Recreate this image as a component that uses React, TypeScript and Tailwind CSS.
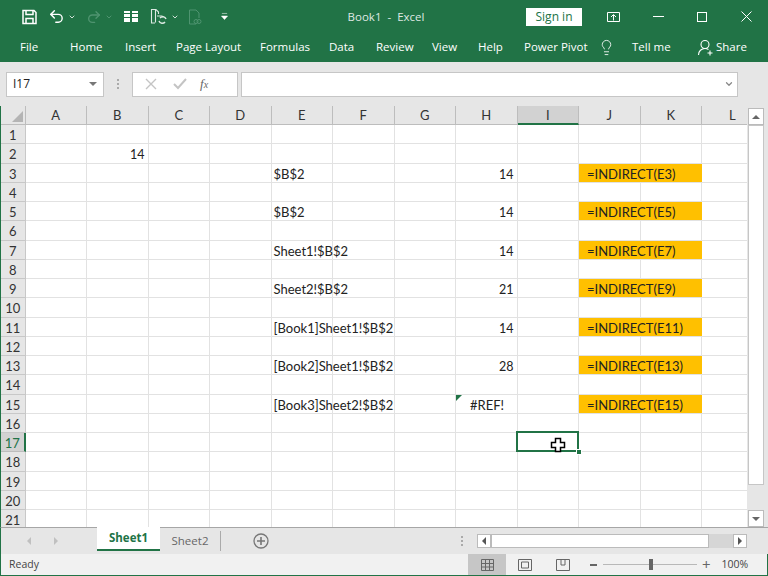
import { ChevronDown, Lightbulb, Redo2, Undo2 } from "lucide-react";

const columns = ["A", "B", "C", "D", "E", "F", "G", "H", "I", "J", "K", "L"];
const rows = Array.from({ length: 21 }, (_, i) => i + 1);

const cells: Record<string, string> = {
  B2: "14",
  E3: "$B$2",
  H3: "14",
  J3: "=INDIRECT(E3)",
  E5: "$B$2",
  H5: "14",
  J5: "=INDIRECT(E5)",
  E7: "Sheet1!$B$2",
  H7: "14",
  J7: "=INDIRECT(E7)",
  E9: "Sheet2!$B$2",
  H9: "21",
  J9: "=INDIRECT(E9)",
  E11: "[Book1]Sheet1!$B$2",
  H11: "14",
  J11: "=INDIRECT(E11)",
  E13: "[Book2]Sheet1!$B$2",
  H13: "28",
  J13: "=INDIRECT(E13)",
  E15: "[Book3]Sheet2!$B$2",
  H15: "#REF!",
  J15: "=INDIRECT(E15)",
};

const tabs = [
  { name: "Home", width: "w-[55px]" },
  { name: "Insert", width: "w-[51px]" },
  { name: "Page Layout", width: "w-[84px]" },
  { name: "Formulas", width: "w-[69px]" },
  { name: "Data", width: "w-[47px]" },
  { name: "Review", width: "w-[56px]" },
  { name: "View", width: "w-[46px]" },
  { name: "Help", width: "w-[46px]" },
  { name: "Power Pivot", width: "w-[74px]" },
];

const Cell = ({ col, row }: { col: string; row: number }) => {
  const id = `${col}${row}`;
  const value = cells[id];
  const isOrange = col === "J" && value;
  const isOrangeK = col === "K" && cells[`J${row}`];
  const isSelected = id === "I17";
  const isNumber = value && col !== "E" && col !== "J" && value !== "#REF!";

  return (
    <div
      className={`relative h-[19.25px] whitespace-nowrap leading-[21px] text-[#222] ${
        isOrange || isOrangeK ? "bg-[#ffc000] border-b border-b-[#e2e2e2]" : "border-b border-r border-[#e2e2e2]"
      } ${isNumber ? "text-right pr-[3px] text-[12.5px]" : "pl-[2px] text-[13px]"} ${col === "J" ? "pl-[8px] text-[12.5px]" : ""}`}
    >
      {isNumber ? value : null}
      {value && !isNumber && value !== "#REF!" ? <span className="relative z-10">{value}</span> : null}
      {value === "#REF!" ? (
        <>
          <div className="absolute left-0 top-0 border-t-[6px] border-r-[6px] border-t-[#217346] border-r-transparent" />
          <div className="pl-[12px]">{value}</div>
        </>
      ) : null}
      {isSelected ? (
        <>
          <div className="absolute -left-[2px] -top-[2px] -right-[1px] -bottom-[1px] z-20 border-2 border-[#217346]" />
          <div className="absolute right-[-4px] bottom-[-4px] z-30 h-[6px] w-[6px] border border-white bg-[#217346]" />
          <svg className="absolute left-[32px] top-[4px] z-30" width="16" height="16" viewBox="0 0 16 16">
            <path d="M5.500 1.500h5v4h4v5h-4v4h-5v-4h-4v-5h4z" fill="#fff" stroke="#000" strokeWidth="1.5" />
          </svg>
        </>
      ) : null}
    </div>
  );
};

export default function App() {
  return (
    <div className="flex h-[576px] w-[768px] flex-col overflow-hidden bg-[#e6e6e6] font-['Open_Sans',sans-serif] text-[#222]">
      {/* title bar */}
      <div className="flex h-[33px] items-center bg-[#217346] text-[11.5px] text-[#dfe9e3]">
        <svg className="ml-[22px]" width="15" height="16" viewBox="0 0 15 16" fill="none" stroke="#fff" strokeWidth="1.5">
          <path d="M1 1.500h11l2 2v11H1z" />
          <path d="M4 1.500v4h7v-4M4 14.500v-5h7v5" />
        </svg>
        <Undo2 className="ml-[11px]" size={17} color="#fff" strokeWidth={2} />
        <ChevronDown className="ml-[3px]" size={8} color="#cfe0d6" strokeWidth={3} />
        <Redo2 className="ml-[10px]" size={16} color="#4f9470" strokeWidth={2} />
        <ChevronDown className="ml-[3px]" size={8} color="#4f9470" strokeWidth={3} />
        <svg className="ml-[10px]" width="16" height="13" viewBox="0 0 16 13">
          <path d="M1 1h6v2H1zM9 1h6v2H9zM1 4h6v3H1zM9 4h6v3H9zM1 8h6v4H1zM9 8h6v4H9z" fill="#fff" />
        </svg>
        <svg className="ml-[11px]" width="18" height="18" viewBox="0 0 18 18" fill="none" stroke="#dce9e2" strokeWidth="1.1">
          <path d="M5 15H1.500V1.500H6L8.500 4v2M1.500 1.500h4v13" />
          <path d="M7 8h5l1 1" />
          <path d="M9 13a3.500 3.500 0 0 0 6 1M16 11a3.500 3.500 0 0 0-6-1" strokeWidth="1.500" />
        </svg>
        <ChevronDown className="ml-[3px]" size={8} color="#cfe0d6" strokeWidth={3} />
        <svg className="ml-[9px]" width="14" height="16" viewBox="0 0 14 16" fill="none" stroke="#4f9470" strokeWidth="1">
          <path d="M8 15H1.500V1H8l3 3v5" />
          <circle cx="8" cy="12.500" r="2" />
          <circle cx="11" cy="12.500" r="2" />
        </svg>
        <svg className="ml-[19px]" width="7" height="9" viewBox="0 0 8 10">
          <path d="M1 1.500h6M0.500 4.500h7L4 8.500z" fill="#fff" stroke="#fff" strokeWidth="0.6" />
        </svg>
        <div className="ml-[103px] w-[110px] text-center whitespace-pre">Book1  -  Excel</div>
        <div className="ml-[85px] flex h-[18px] w-[56px] items-center justify-center bg-white text-[12px] text-[#217346]">Sign in</div>
        <svg className="ml-[25px]" width="13" height="10" viewBox="0 0 13 10" fill="none" stroke="#fff">
          <path d="M.5.500h12v9H.5z" />
          <path d="M6.500 8.500V3M4 5l2.500-2.500L9 5" />
        </svg>
        <div className="ml-[33px] h-[1px] w-[11px] bg-white" />
        <div className="ml-[33px] h-[10px] w-[10px] border border-white" />
        <svg className="ml-[34px]" width="11" height="11" viewBox="0 0 11 11" stroke="#fff" strokeWidth="1">
          <path d="M.5.500l10 10M10.500.500l-10 10" />
        </svg>
      </div>
      {/* ribbon tabs */}
      <div className="flex h-[29px] items-center bg-[#217346] pb-[1px] text-[11.5px] text-white">
        <div className="ml-[20px] w-[50px]">File</div>
        {tabs.map((tab) => (
          <div key={tab.name} className={`${tab.width} shrink-0 whitespace-nowrap`}>
            {tab.name}
          </div>
        ))}
        <Lightbulb className="mr-[17px]" size={17} color="#fff" strokeWidth={1.2} />
        <div className="w-[56px]">Tell me</div>
        <svg className="ml-[9px]" width="17" height="17" viewBox="0 0 17 17" fill="none" stroke="#fff" strokeWidth="1.1">
          <circle cx="8" cy="5.500" r="4" />
          <path d="M1.500 16c0-4 3-6.500 6.500-6.500 1.500 0 2.500.4 3.500 1M13 11.500v5M10.500 14h5" />
        </svg>
        <div className="ml-[2px]">Share</div>
      </div>
      {/* formula bar */}
      <div className="flex h-[44px] items-center bg-[#e6e6e6] pl-[6px]">
        <div className="flex h-[25px] w-[98px] items-center justify-between border border-[#c6c6c6] bg-white pl-[6px] pr-[6px] text-[12px]">
          I17
          <div className="border-x-[4px] border-t-[4px] border-x-transparent border-t-[#777]" />
        </div>
        <div className="ml-[13px] flex flex-col gap-[2px]">
          <div className="h-[2px] w-[2px] bg-[#aaa]" />
          <div className="h-[2px] w-[2px] bg-[#aaa]" />
          <div className="h-[2px] w-[2px] bg-[#aaa]" />
        </div>
        <div className="ml-[13px] flex h-[25px] w-[106px] items-center border border-[#c6c6c6] bg-white pl-[12px]">
          <svg width="12" height="12" viewBox="0 0 12 12" stroke="#c4c4c4" strokeWidth="1.4">
            <path d="M1 1l10 10M11 1L1 11" />
          </svg>
          <svg className="ml-[16px]" width="14" height="12" viewBox="0 0 14 12" fill="none" stroke="#c4c4c4" strokeWidth="2">
            <path d="M1 6l4 4 8-9" />
          </svg>
          <span className="ml-[13px] font-['Liberation_Serif',serif] text-[13px] italic text-[#666]">
            f<span className="text-[10px]">x</span>
          </span>
        </div>
        <div className="ml-[3px] flex h-[25px] w-[497px] items-center justify-end border border-[#c6c6c6] bg-white pr-[3px]">
          <ChevronDown size={10} color="#888" strokeWidth={3} />
        </div>
      </div>
      {/* sheet */}
      <div className="flex h-[421px] border-l border-[#217346]">
        <div className="w-[746px] overflow-hidden bg-white">
          <div className="grid w-[763px] grid-cols-[24.5px_repeat(12,61.5px)] font-['Lato',sans-serif]">
            <div className="relative h-[19px] border-b border-r border-[#bdbdbd] bg-[#e6e6e6]">
              <div className="absolute bottom-[2px] right-[2px] border-b-[11px] border-l-[11px] border-b-[#b4b4b4] border-l-transparent" />
            </div>
            {columns.map((col) => (
              <div
                key={col}
                className={`h-[19px] border-r text-center text-[13px] leading-[19px] ${
                  col === "I"
                    ? "border-b-2 border-[#bdbdbd] border-b-[#217346] bg-[#d2d2d2] text-[#333]"
                    : "border-b border-[#bdbdbd] bg-[#e6e6e6] text-[#333]"
                }`}
              >
                {col}
              </div>
            ))}
            {rows.map((row) => (
              <div key={row} className="contents">
                <div
                  className={`h-[19.25px] border-b border-r text-center text-[13px] leading-[21px] ${
                    row === 17
                      ? "border-[#bdbdbd] border-r-2 border-r-[#217346] bg-[#d2d2d2] text-[#217346]"
                      : "border-[#c8c8c8] bg-[#e6e6e6] text-[#333]"
                  }`}
                >
                  {row}
                </div>
                {columns.map((col) => (
                  <Cell key={col} col={col} row={row} />
                ))}
              </div>
            ))}
          </div>
        </div>
        {/* vertical scrollbar */}
        <div className="flex w-[20px] flex-col border-r border-[#e6e6e6] bg-[#e6e6e6] pl-[1px] pr-[2px] pt-[2px]">
          <div className="flex h-[17px] items-center justify-center border border-[#bbb] bg-white">
            <div className="border-x-[4px] border-b-[4px] border-x-transparent border-b-[#666]" />
          </div>
          <div className="h-[360px] border border-[#c6c6c6] bg-white" />
          <div className="flex-1" />
          <div className="flex h-[17px] items-center justify-center border border-[#bbb] bg-white">
            <div className="border-x-[4px] border-t-[4px] border-x-transparent border-t-[#666]" />
          </div>
        </div>
      </div>
      {/* sheet tabs */}
      <div className="flex h-[27px] items-center border-l border-t border-[#217346] border-t-[#a6a6a6] bg-[#e6e6e6] text-[11.5px]">
        <div className="ml-[26px] border-y-[4px] border-r-[4px] border-y-transparent border-r-[#c0c0c0]" />
        <div className="ml-[23px] border-y-[4px] border-l-[4px] border-y-transparent border-l-[#c0c0c0]" />
        <div className="ml-[39px] mt-[-1px] flex h-[24px] w-[63px] items-center justify-center self-start border-b-2 border-[#217346] bg-white font-bold text-[#217346]">
          Sheet1
        </div>
        <div className="flex h-[20px] w-[61px] items-center justify-center border-r border-[#aaa] text-[#666]">Sheet2</div>
        <svg className="ml-[32px]" width="16" height="16" viewBox="0 0 16 16" fill="none" stroke="#777" strokeWidth="1.3">
          <circle cx="8" cy="8" r="7" />
          <path d="M8 4v8M4 8h8" strokeWidth="1.6" />
        </svg>
        <div className="ml-[192px] flex flex-col gap-[2px]">
          <div className="h-[2px] w-[2px] bg-[#aaa]" />
          <div className="h-[2px] w-[2px] bg-[#aaa]" />
          <div className="h-[2px] w-[2px] bg-[#aaa]" />
        </div>
        <div className="ml-[14px] flex h-[14px] w-[270px] items-center bg-[#d6d6d6]">
          <div className="flex h-[14px] w-[14px] items-center justify-center border border-[#bbb] bg-white">
            <div className="border-y-[4px] border-r-[4px] border-y-transparent border-r-[#555]" />
          </div>
          <div className="h-[14px] w-[218px] border border-[#bbb] bg-white" />
          <div className="flex-1" />
          <div className="flex h-[14px] w-[14px] items-center justify-center border border-[#bbb] bg-white">
            <div className="border-y-[4px] border-l-[4px] border-y-transparent border-l-[#555]" />
          </div>
        </div>
      </div>
      {/* status bar */}
      <div className="flex h-[22px] items-center border-x border-b border-[#217346] border-t-transparent bg-[#f1f1f1] text-[10.5px] text-[#444]">
        <div className="ml-[8px] w-[459px]">Ready</div>
        <div className="flex h-full w-[38px] items-center justify-center bg-[#c6c6c6]">
          <svg width="13" height="12" viewBox="0 0 13 12" fill="none" stroke="#666">
            <path d="M.5.500h12v11H.5zM4.500.500v11M8.500.500v11M.5 4.500h12M.5 8h12" />
          </svg>
        </div>
        <div className="flex h-full w-[38px] items-center justify-center">
          <svg width="14" height="12" viewBox="0 0 14 12" fill="none" stroke="#666">
            <path d="M.5.500h13v11H.5zM3.500 3h7v6h-7z" />
          </svg>
        </div>
        <div className="flex h-full w-[38px] items-center justify-center">
          <svg width="14" height="12" viewBox="0 0 14 12" fill="none" stroke="#666">
            <path d="M.5.500h13v11H.5zM5 .500V6h4V.500" />
          </svg>
        </div>
        <div className="ml-[8px] h-[2px] w-[7px] bg-[#666]" />
        <div className="relative ml-[6px] h-[1px] w-[94px] bg-[#b8b8b8]">
          <div className="absolute left-[46px] top-[-5px] h-[11px] w-[4px] bg-[#666]" />
        </div>
        <div className="ml-[5px] text-[15px] leading-none text-[#666]">+</div>
        <div className="ml-[11px] text-[10.5px]">100%</div>
      </div>
    </div>
  );
}
